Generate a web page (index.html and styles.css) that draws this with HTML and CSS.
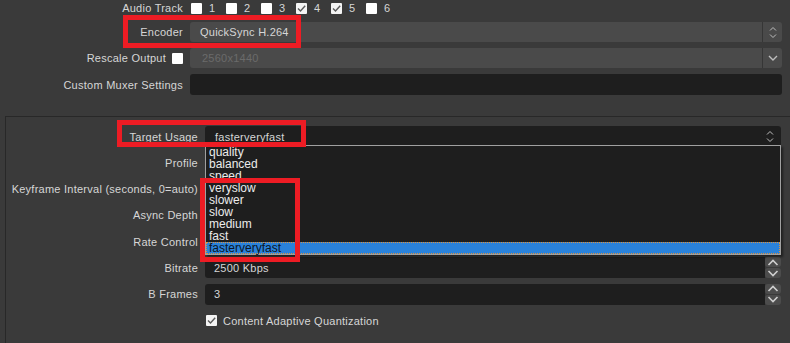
FILE: index.html
```html
<!DOCTYPE html>
<html>
<head>
<meta charset="utf-8">
<link rel="stylesheet" href="styles.css">
</head>
<body>
<div class="top">
  <div class="label">Audio Track</div>
  <div class="tracks">
    <div class="track"><svg class="cb" width="11" height="11" viewBox="0 0 11 11"><rect x="0" y="0" width="11" height="11" rx="1" fill="#fff"/></svg><span>1</span></div>
    <div class="track"><svg class="cb" width="11" height="11" viewBox="0 0 11 11"><rect x="0" y="0" width="11" height="11" rx="1" fill="#fff"/></svg><span>2</span></div>
    <div class="track"><svg class="cb" width="11" height="11" viewBox="0 0 11 11"><rect x="0" y="0" width="11" height="11" rx="1" fill="#fff"/></svg><span>3</span></div>
    <div class="track"><svg class="cb" width="11" height="11" viewBox="0 0 11 11"><rect x="0" y="0" width="11" height="11" rx="1" fill="#f4f4f4"/><path d="M2 5.5 L4.5 8 L9.2 2.8" fill="none" stroke="#5a5a5a" stroke-width="1.4"/></svg><span>4</span></div>
    <div class="track"><svg class="cb" width="11" height="11" viewBox="0 0 11 11"><rect x="0" y="0" width="11" height="11" rx="1" fill="#f4f4f4"/><path d="M2 5.5 L4.5 8 L9.2 2.8" fill="none" stroke="#5a5a5a" stroke-width="1.4"/></svg><span>5</span></div>
    <div class="track"><svg class="cb" width="11" height="11" viewBox="0 0 11 11"><rect x="0" y="0" width="11" height="11" rx="1" fill="#fff"/></svg><span>6</span></div>
  </div>

  <div class="label">Encoder</div>
  <div class="combo">
    <div class="value">QuickSync H.264</div>
    <div class="arrow sep">
      <svg width="8" height="5" viewBox="0 0 8 5"><path d="M1 4.5 L4 1.5 L7 4.5" fill="none" stroke="#bdbdbd" stroke-width="1"/></svg>
      <svg width="8" height="5" viewBox="0 0 8 5"><path d="M1 0.5 L4 3.5 L7 0.5" fill="none" stroke="#bdbdbd" stroke-width="1"/></svg>
    </div>
  </div>

  <div class="label">Rescale Output<svg class="cb rescale-cb" width="11" height="11" viewBox="0 0 11 11"><rect x="0" y="0" width="11" height="11" rx="1" fill="#fff"/></svg></div>
  <div class="combo disabled">
    <div class="value">2560x1440</div>
    <div class="arrow sep">
      <svg width="10" height="6" viewBox="0 0 10 6"><path d="M1 1 L5 5 L9 1" fill="none" stroke="#bdbdbd" stroke-width="1.4"/></svg>
    </div>
  </div>

  <div class="label">Custom Muxer Settings</div>
  <div class="input"></div>
</div>

<div class="frame">
  <div class="label">Target Usage</div>
  <div class="combo dark">
    <div class="value">fasterveryfast</div>
    <div class="arrow">
      <svg width="8" height="5" viewBox="0 0 8 5"><path d="M1 4.5 L4 1.5 L7 4.5" fill="none" stroke="#bdbdbd" stroke-width="1"/></svg>
      <svg width="8" height="5" viewBox="0 0 8 5"><path d="M1 0.5 L4 3.5 L7 0.5" fill="none" stroke="#bdbdbd" stroke-width="1"/></svg>
    </div>
  </div>

  <div class="label">Profile</div>
  <div class="combo dark"></div>

  <div class="label">Keyframe Interval (seconds, 0=auto)</div>
  <div class="spinbox"><div class="field"></div><div class="spin"><div class="btn"></div><div class="btn"></div></div></div>

  <div class="label">Async Depth</div>
  <div class="spinbox"><div class="field"></div><div class="spin"><div class="btn"></div><div class="btn"></div></div></div>

  <div class="label">Rate Control</div>
  <div class="combo dark"></div>

  <div class="label">Bitrate</div>
  <div class="spinbox">
    <div class="field">2500 Kbps</div>
    <div class="spin">
      <div class="btn"><svg width="12" height="7" viewBox="0 0 12 7"><path d="M1.5 6 L6 1.5 L10.5 6" fill="none" stroke="#cfcfcf" stroke-width="1.6"/></svg></div>
      <div class="btn"><svg width="12" height="7" viewBox="0 0 12 7"><path d="M1.5 1 L6 5.5 L10.5 1" fill="none" stroke="#cfcfcf" stroke-width="1.6"/></svg></div>
    </div>
  </div>

  <div class="label">B Frames</div>
  <div class="spinbox">
    <div class="field">3</div>
    <div class="spin">
      <div class="btn"><svg width="12" height="7" viewBox="0 0 12 7"><path d="M1.5 6 L6 1.5 L10.5 6" fill="none" stroke="#cfcfcf" stroke-width="1.6"/></svg></div>
      <div class="btn"><svg width="12" height="7" viewBox="0 0 12 7"><path d="M1.5 1 L6 5.5 L10.5 1" fill="none" stroke="#cfcfcf" stroke-width="1.6"/></svg></div>
    </div>
  </div>

  <div class="label"></div>
  <div class="check-row"><svg class="cb" width="11" height="11" viewBox="0 0 11 11"><rect x="0" y="0" width="11" height="11" rx="1" fill="#f4f4f4"/><path d="M2 5.5 L4.5 8 L9.2 2.8" fill="none" stroke="#5a5a5a" stroke-width="1.4"/></svg><span>Content Adaptive Quantization</span></div>
</div>

<ul class="popup">
  <li>quality</li>
  <li>balanced</li>
  <li>speed</li>
  <li>veryslow</li>
  <li>slower</li>
  <li>slow</li>
  <li>medium</li>
  <li>fast</li>
  <li class="selected">fasterveryfast</li>
</ul>

<div class="mark mark-encoder"></div>
<div class="mark mark-target"></div>
<div class="mark mark-list"></div>
</body>
</html>
```

FILE: styles.css
```css
* { box-sizing: border-box; }
html, body { margin: 0; padding: 0; }
body {
  width: 790px;
  height: 343px;
  overflow: hidden;
  position: relative;
  background: #3a3a3a;
  color: #d6d6d6;
  font-family: "Liberation Sans", Arial, sans-serif;
  font-size: 11px;
  letter-spacing: 0.25px;
}
.top {
  display: grid;
  grid-template-columns: 183px 592px;
  column-gap: 7px;
  row-gap: 6px;
  grid-template-rows: 16px 20px 20px 21px;
}
.label {
  display: flex;
  align-items: center;
  justify-content: flex-end;
  white-space: nowrap;
}
.cb { display: block; flex: none; }
.rescale-cb { margin-left: 6px; }
.tracks { display: flex; align-items: center; padding-left: 1px; }
.track { width: 35px; display: flex; align-items: center; gap: 7px; }
.combo {
  background: #4a4a4a;
  border-radius: 3px;
  display: flex;
  align-items: center;
  overflow: hidden;
}
.combo .value { flex: 1; padding-left: 10px; white-space: nowrap; }
.combo .arrow {
  width: 20px;
  align-self: stretch;
  display: flex;
  flex-direction: column;
  align-items: center;
  justify-content: center;
  gap: 3px;
}
.combo .arrow.sep { border-left: 1px solid #363636; }
.combo.disabled .value { color: #6b6b6b; padding-left: 12px; }
.combo.dark { background: #1e1e1e; }
.combo.dark .arrow { width: 22px; }
.input { background: #1e1e1e; border-radius: 3px; }

.frame {
  margin-top: 21px;
  margin-left: 5px;
  width: 785px;
  height: 227px;
  border-top: 1px solid #282828;
  border-left: 1px solid #282828;
  padding-top: 9px;
  display: grid;
  grid-template-columns: 192px 576px;
  column-gap: 7px;
  row-gap: 5.3px;
  grid-auto-rows: 21px;
  align-content: start;
}
.spinbox { display: flex; }
.spinbox .field {
  flex: 1;
  background: #1e1e1e;
  border-radius: 3px 0 0 3px;
  display: flex;
  align-items: center;
  padding-left: 9px;
}
.spinbox .spin {
  width: 16px;
  display: flex;
  flex-direction: column;
  gap: 1px;
}
.spinbox .btn {
  flex: 1;
  background: #4c4c4c;
  border-radius: 3px;
  display: flex;
  align-items: center;
  justify-content: center;
}
.check-row { display: flex; align-items: center; gap: 6px; padding-left: 1px; }

.popup {
  position: absolute;
  left: 205px;
  top: 145px;
  width: 576px;
  height: 110px;
  margin: 0;
  padding: 0;
  list-style: none;
  background: #1e1e1e;
  border: 1px solid #a0a0a0;
  box-shadow: 2px 2px 2px rgba(0, 0, 0, 0.45);
  font-size: 12px;
  letter-spacing: 0;
  color: #ececec;
}
.popup li { height: 12px; line-height: 12px; padding-left: 3px; white-space: nowrap; }
.popup li.selected {
  background: #2a82da;
  color: #0c1626;
  outline: 1px dotted #e0913a;
  outline-offset: -1px;
}
.mark { position: absolute; border: 5px solid #ed1c24; }
.mark-encoder { left: 123px; top: 15px; width: 178px; height: 33px; }
.mark-target { left: 117px; top: 120px; width: 189px; height: 27px; }
.mark-list { left: 200px; top: 178px; width: 100px; height: 84px; }
```
